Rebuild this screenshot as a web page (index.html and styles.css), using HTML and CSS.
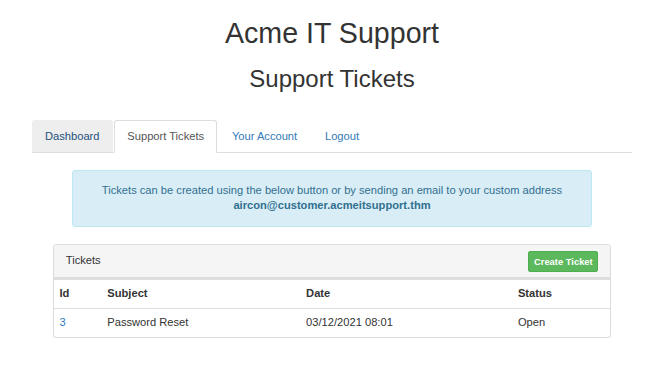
FILE: index.html
```html
<!DOCTYPE html>
<html>
<head>
  <title>Acme IT Support - Support Tickets</title>
  <link rel="stylesheet" href="styles.css">
</head>
<body>
  <div class="container">
    <h1>Acme IT Support</h1>
    <h2>Support Tickets</h2>

    <ul class="nav-tabs">
      <li><a href="#" class="hover">Dashboard</a></li>
      <li><a href="#" class="active">Support Tickets</a></li>
      <li><a href="#">Your Account</a></li>
      <li><a href="#">Logout</a></li>
    </ul>

    <div class="alert">
      Tickets can be created using the below button or by sending an email to your custom address<br>
      <strong>aircon@customer.acmeitsupport.thm</strong>
    </div>

    <div class="panel">
      <div class="panel-heading">
        <button class="btn-success">Create Ticket</button>
        Tickets
      </div>
      <table>
        <thead>
          <tr>
            <th class="col-id">Id</th>
            <th class="col-subject">Subject</th>
            <th class="col-date">Date</th>
            <th>Status</th>
          </tr>
        </thead>
        <tbody>
          <tr>
            <td><a href="#">3</a></td>
            <td>Password Reset</td>
            <td>03/12/2021 08:01</td>
            <td>Open</td>
          </tr>
        </tbody>
      </table>
    </div>
  </div>
</body>
</html>
```

FILE: styles.css
```css
body {
  margin: 0;
  font-family: "Liberation Sans", Arial, Helvetica, sans-serif;
  font-size: 11.15px;
  line-height: 15.7px;
  color: #333;
  background: #fff;
}

a {
  color: #337ab7;
  text-decoration: none;
}

.container {
  width: 600px;
  margin-left: 32px;
}

h1,
h2 {
  font-weight: 500;
  line-height: 1.1;
  text-align: center;
  color: #333;
}

h1 {
  font-size: 28.6px;
  margin: 18px 0 0;
}

h2 {
  font-size: 24px;
  margin: 17px 0 26.8px;
}

.nav-tabs {
  list-style: none;
  margin: 0;
  padding: 0;
  display: flex;
  border-bottom: 1px solid #ddd;
}

.nav-tabs li {
  margin-right: 1.8px;
  margin-bottom: -1px;
}

.nav-tabs a {
  display: block;
  padding: 8px 12px;
  border: 1px solid transparent;
  border-radius: 3px 3px 0 0;
}

.nav-tabs a.hover {
  background: #eee;
  border-color: #eee #eee #ddd;
  color: #23527c;
}

.nav-tabs a.active {
  background: #fff;
  color: #555;
  border-color: #ddd #ddd transparent;
}

.alert {
  margin: 16.5px 40px 17.5px;
  padding: 11.8px;
  background: #d9edf7;
  border: 1px solid #bce8f1;
  border-radius: 3px;
  color: #31708f;
  text-align: center;
}

.panel {
  margin: 0 21px;
  border: 1px solid #ddd;
  border-radius: 3px;
  box-shadow: 0 1px 1px rgba(0, 0, 0, 0.05);
  background: #fff;
}

.panel-heading {
  padding: 7.9px 11.8px;
  background: #f5f5f5;
  border-bottom: 3px solid #ddd;
  border-radius: 3px 3px 0 0;
}

.btn-success {
  float: right;
  margin-top: -2px;
  padding: 3px 4.5px;
  font-family: inherit;
  font-size: 9.4px;
  font-weight: 700;
  line-height: 13px;
  color: #fff;
  background: #5cb85c;
  border: 1px solid #4cae4c;
  border-radius: 2px;
  cursor: pointer;
}

table {
  width: 100%;
  border-collapse: collapse;
  table-layout: fixed;
}

th,
td {
  padding: 6.3px 6.3px 6.3px 5.5px;
  text-align: left;
  vertical-align: top;
}

th {
  font-weight: 700;
  padding-top: 5.8px;
  padding-bottom: 6.8px;
}

td {
  border-top: 1px solid #ddd;
}

.col-id {
  width: 36px;
}

.col-subject {
  width: 187px;
}

.col-date {
  width: 200px;
}
```
